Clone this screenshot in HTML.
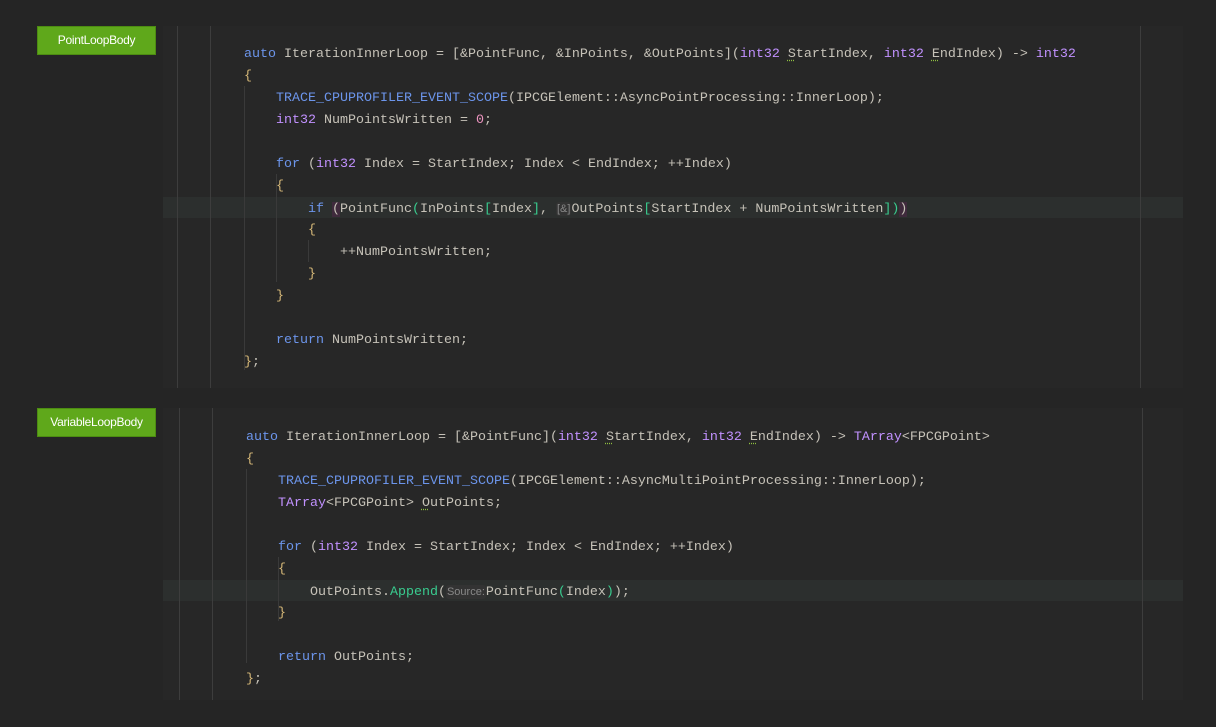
<!DOCTYPE html>
<html><head><meta charset="utf-8"><style>
body{margin:0;width:1216px;height:727px;background:#252525;position:relative;overflow:hidden;font-family:"Liberation Mono",monospace}
.btn{position:absolute;left:37px;width:117px;height:27px;background:#5fa81b;border:1px solid #4d8c12;color:#fff;font:12px "Liberation Sans",sans-serif;text-align:center;line-height:27px;letter-spacing:-0.3px}
.panel{position:absolute;left:163px;width:1020px;background:#272727}
.vl{position:absolute;width:1px;background:#3d3d3d}
.hl{position:absolute;left:163px;width:1020px;height:21px;background:#2c2f2e}
.code{position:absolute;font-size:13.33px;line-height:22px;color:#c6c2b8;white-space:normal}
.code div{height:22px;white-space:pre}
.k{color:#6c95eb}.t{color:#c191ff}.n{color:#ed94c0}.g{color:#39cc8f}.b{color:#d6b878}
.u{text-decoration:underline dotted #8fbf3f;text-underline-offset:3px}
.hint{background:#333;color:#888;font-size:11px;border-radius:3px;padding:1px 1px;font-family:"Liberation Sans",sans-serif}
.pp{background:#3f2a3c}
.ig{position:absolute;width:1px;background:#3a3a3a}
</style></head><body>
<div class="btn" style="top:26px">PointLoopBody</div>
<div class="btn" style="top:408px">VariableLoopBody</div>
<div class="panel" style="top:26px;height:362px"></div>
<div class="panel" style="top:408px;height:292px"></div>
<div class="hl" style="top:197px"></div>
<div class="hl" style="top:580px"></div>
<div class="vl" style="left:177px;top:26px;height:362px"></div>
<div class="vl" style="left:210px;top:26px;height:362px"></div>
<div class="vl" style="left:1140px;top:26px;height:362px"></div>
<div class="vl" style="left:179px;top:408px;height:292px"></div>
<div class="vl" style="left:212px;top:408px;height:292px"></div>
<div class="vl" style="left:1142px;top:408px;height:292px"></div>
<div class="ig" style="left:244px;top:86px;height:284px"></div>
<div class="ig" style="left:276px;top:174px;height:108px"></div>
<div class="ig" style="left:308px;top:240px;height:22px"></div>
<div class="ig" style="left:246px;top:469px;height:194px"></div>
<div class="ig" style="left:278px;top:557px;height:64px"></div>
<div class="code" style="left:244px;top:44px"><div><span class="k">auto</span> IterationInnerLoop = [&amp;PointFunc, &amp;InPoints, &amp;OutPoints](<span class="t">int32</span> <span class="u">S</span>tartIndex, <span class="t">int32</span> <span class="u">E</span>ndIndex) -&gt; <span class="t">int32</span></div><div><span class="b">{</span></div><div>    <span class="k">TRACE_CPUPROFILER_EVENT_SCOPE</span>(IPCGElement::AsyncPointProcessing::InnerLoop);</div><div>    <span class="t">int32</span> NumPointsWritten = <span class="n">0</span>;</div><div></div><div>    <span class="k">for</span> (<span class="t">int32</span> Index = StartIndex; Index &lt; EndIndex; ++Index)</div><div>    <span class="b">{</span></div><div>        <span class="k">if</span> <span class="pp">(</span>PointFunc<span class="g">(</span>InPoints<span class="g">[</span>Index<span class="g">]</span>, <span class="hint">[&amp;]</span>OutPoints<span class="g">[</span>StartIndex + NumPointsWritten<span class="g">])</span><span class="pp">)</span></div><div>        <span class="b">{</span></div><div>            ++NumPointsWritten;</div><div>        <span class="b">}</span></div><div>    <span class="b">}</span></div><div></div><div>    <span class="k">return</span> NumPointsWritten;</div><div><span class="b">}</span>;</div></div>
<div class="code" style="left:246px;top:427px"><div><span class="k">auto</span> IterationInnerLoop = [&amp;PointFunc](<span class="t">int32</span> <span class="u">S</span>tartIndex, <span class="t">int32</span> <span class="u">E</span>ndIndex) -&gt; <span class="t">TArray</span>&lt;FPCGPoint&gt;</div><div><span class="b">{</span></div><div>    <span class="k">TRACE_CPUPROFILER_EVENT_SCOPE</span>(IPCGElement::AsyncMultiPointProcessing::InnerLoop);</div><div>    <span class="t">TArray</span>&lt;FPCGPoint&gt; <span class="u">O</span>utPoints;</div><div></div><div>    <span class="k">for</span> (<span class="t">int32</span> Index = StartIndex; Index &lt; EndIndex; ++Index)</div><div>    <span class="b">{</span></div><div>        OutPoints.<span class="g">Append</span>(<span class="hint">Source:</span>PointFunc<span class="g">(</span>Index<span class="g">)</span>);</div><div>    <span class="b">}</span></div><div></div><div>    <span class="k">return</span> OutPoints;</div><div><span class="b">}</span>;</div></div>
</body></html>
